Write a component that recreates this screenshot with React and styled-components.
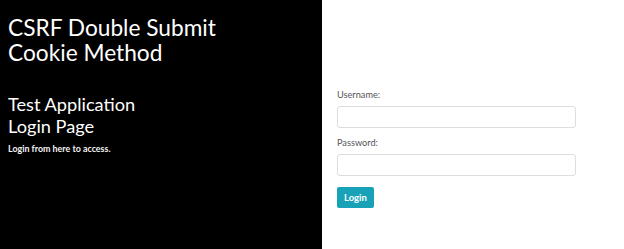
import React from "react";
import styled, { createGlobalStyle } from "styled-components";

const GlobalStyle = createGlobalStyle`
  html, body {
    margin: 0;
    padding: 0;
    height: 100%;
    background: #ffffff;
  }
  #root {
    height: 100%;
  }
  * {
    box-sizing: border-box;
  }
`;

const Page = styled.div`
  display: flex;
  height: 249px;
  font-family: Lato, "Open Sans", sans-serif;
`;

const Side = styled.div`
  width: 322px;
  background: #000000;
  color: #ffffff;
  padding: 15px 8px 0;
`;

const Title = styled.h1`
  margin: 0;
  font-size: 22.7px;
  font-weight: 400;
  line-height: 25px;
`;

const SubTitle = styled.h2`
  margin: 28px 0 0;
  font-size: 18.2px;
  font-weight: 400;
  line-height: 22px;
`;

const Note = styled.p`
  margin: 6px 0 0;
  font-size: 8.9px;
  font-weight: 700;
  color: #f4f4f4;
`;

const Main = styled.div`
  flex: 1;
  padding: 89px 0 0 15px;
`;

const Form = styled.form`
  width: 239px;
`;

const Label = styled.label`
  display: block;
  font-size: 9.2px;
  line-height: 12px;
  color: #555555;
  margin-bottom: 5px;
`;

const Field = styled.div`
  margin-bottom: 9px;
`;

const Input = styled.input`
  display: block;
  width: 100%;
  height: 22px;
  border: 1px solid #dddddd;
  border-radius: 3px;
  background: #ffffff;
  outline: none;
`;

const Button = styled.button`
  height: 21px;
  padding: 0 7px;
  border: none;
  border-radius: 2px;
  background: #17a2b8;
  color: #ffffff;
  font-family: Lato, sans-serif;
  font-size: 9.5px;
  font-weight: 700;
`;

export default function App() {
  return (
    <>
      <GlobalStyle />
      <Page>
        <Side>
          <Title>
            CSRF Double Submit
            <br />
            Cookie Method
          </Title>
          <SubTitle>
            Test Application
            <br />
            Login Page
          </SubTitle>
          <Note>Login from here to access.</Note>
        </Side>
        <Main>
          <Form onSubmit={(e) => e.preventDefault()}>
            <Field>
              <Label>Username:</Label>
              <Input type="text" />
            </Field>
            <Field>
              <Label>Password:</Label>
              <Input type="password" />
            </Field>
            <Button type="submit">Login</Button>
          </Form>
        </Main>
      </Page>
    </>
  );
}
